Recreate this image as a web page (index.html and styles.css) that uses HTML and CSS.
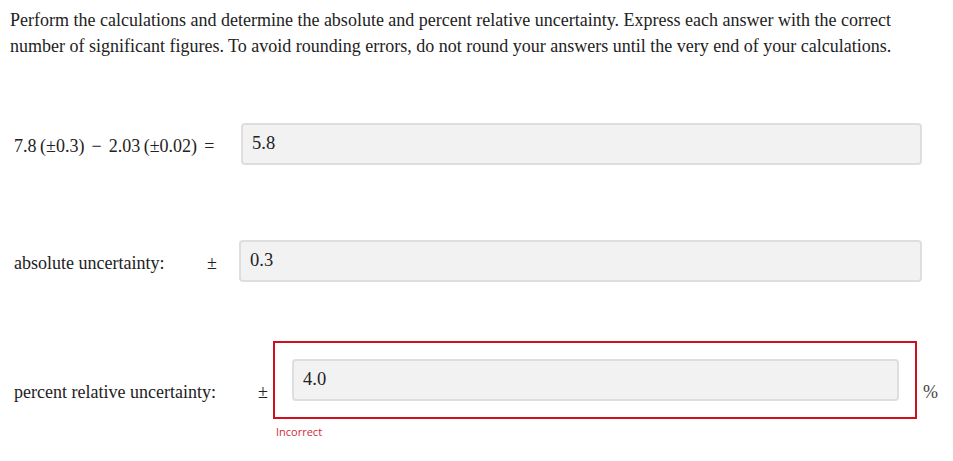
FILE: index.html
```html
<!DOCTYPE html>
<html lang="en">
<head>
    <meta charset="UTF-8">
    <meta name="viewport" content="width=device-width, initial-scale=1.0">
    <title>Uncertainty</title>
    <link rel="stylesheet" href="styles.css">
</head>
<body>
    <div class="question">
        <p class="prompt">Perform the calculations and determine the absolute and percent relative uncertainty. Express each answer with the correct number of significant figures. To avoid rounding errors, do not round your answers until the very end of your calculations.</p>

        <div class="row row-result">
            <span class="label">7.8&#8201;(&plusmn;0.3)<span class="op">&minus;</span>2.03&#8201;(&plusmn;0.02)<span class="op">=</span></span>
            <input class="answer" type="text" value="5.8">
        </div>

        <div class="row row-abs">
            <span class="label">absolute uncertainty:</span>
            <span class="pm">&plusmn;</span>
            <input class="answer" type="text" value="0.3">
        </div>

        <div class="row row-pct">
            <span class="label">percent relative uncertainty:</span>
            <span class="pm">&plusmn;</span>
            <div class="field">
                <div class="wrong">
                    <input class="answer" type="text" value="4.0">
                </div>
                <div class="feedback">Incorrect</div>
            </div>
            <span class="unit">%</span>
        </div>
    </div>
</body>
</html>
```

FILE: styles.css
```css
body {
    margin: 0;
    padding: 0;
    background: #fff;
    color: #222;
    font-family: "Liberation Serif", "Times New Roman", serif;
    font-size: 18px;
}

.question {
    padding: 7px 10px 0 10px;
}

.prompt {
    margin: 0;
    line-height: 26px;
}

.row {
    display: flex;
    align-items: center;
    padding-left: 4px;
}

.label,
.pm,
.unit {
    padding-top: 5px;
    white-space: nowrap;
}

.op {
    margin: 0 7px;
}

.answer {
    flex: 1;
    box-sizing: border-box;
    height: 42px;
    padding: 0 0 2px 9px;
    border: 2px solid #dedede;
    border-radius: 4px;
    background: #f2f2f2;
    color: #222;
    font-family: "Liberation Serif", "Times New Roman", serif;
    font-size: 18.5px;
    outline: none;
}

.row-result {
    margin-top: 64px;
    margin-right: 21px;
}

.row-result .label {
    width: 227px;
}

.row-abs {
    margin-top: 75px;
    margin-right: 21px;
}

.row-abs .label {
    width: 193px;
}

.row-abs .pm {
    width: 32px;
}

.row-pct {
    margin-top: 59px;
}

.row-pct .label {
    width: 244px;
}

.row-pct .pm {
    width: 15px;
}

.field {
    flex: 1;
    display: flex;
    flex-direction: column;
}

.wrong {
    display: flex;
    padding: 16px 16px 16px 17px;
    border: 2px solid #cf111f;
}

.feedback {
    padding: 5px 0 0 3px;
    height: 15px;
    color: #d02a38;
    font-family: "Open Sans", "Liberation Sans", sans-serif;
    font-size: 11px;
    line-height: 15px;
}

.unit {
    width: 14px;
    margin-left: 6px;
    margin-right: 6px;
    color: #444;
}
```
